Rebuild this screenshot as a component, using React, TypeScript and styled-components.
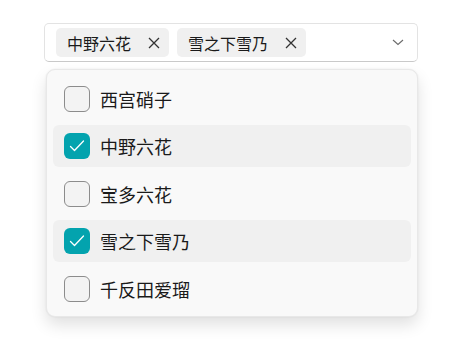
import React, { useState } from "react";
import styled, { createGlobalStyle } from "styled-components";

const GlobalStyle = createGlobalStyle`
  html, body {
    margin: 0;
    padding: 0;
    background: #ffffff;
  }
  body {
    font-family: "Noto Sans CJK SC", "Noto Sans", sans-serif;
    color: #1a1a1a;
  }
`

const Page = styled.div`
  width: 462px;
  height: 362px;
  padding: 23px 44px 0 44px;
  box-sizing: border-box;
  display: flex;
  flex-direction: column;
  gap: 7px;
`

const Field = styled.div`
  height: 39px;
  box-sizing: border-box;
  border: 1px solid #e3e3e3;
  border-bottom-color: #c9c9c9;
  border-radius: 5px;
  background: #ffffff;
  display: flex;
  align-items: center;
  padding: 0 13px 0 11px;
  gap: 8px;
`

const Tag = styled.div`
  height: 29px;
  box-sizing: border-box;
  background: #f0f0f0;
  border-radius: 5px;
  display: flex;
  align-items: center;
  padding: 0 9px 0 11px;
  gap: 17px;
  font-size: 16px;
  line-height: 1;
`

const Chevron = styled.div`
  margin-left: auto;
  display: flex;
  align-items: center;
`

const Panel = styled.div`
  margin: 0 0 0 2px;
  width: 372px;
  box-sizing: border-box;
  background: #f9f9f9;
  border: 1px solid #e8e8e8;
  border-radius: 9px;
  box-shadow: 0 8px 16px rgba(0, 0, 0, 0.12), 0 0 2px rgba(0, 0, 0, 0.08);
  padding: 7.5px 6px 6.5px 6px;
  display: flex;
  flex-direction: column;
  gap: 5.5px;
`

const Row = styled.div<{ $selected: boolean }>`
  height: 42px;
  border-radius: 6px;
  background: ${({ $selected }) => $selected ? "#f0f0f0" : "transparent"};
  display: flex;
  align-items: center;
  padding-left: 11px;
  gap: 10px;
  font-size: 18px;
  cursor: default;
`

const Box = styled.div<{ $checked: boolean }>`
  width: 26px;
  height: 26px;
  box-sizing: border-box;
  border-radius: 6px;
  border: ${({ $checked }) => $checked ? "none" : "1.5px solid #8c8c8c"};
  background: ${({ $checked }) => $checked ? "#03a3ae" : "#f3f3f3"};
  display: flex;
  align-items: center;
  justify-content: center;
`

const Close = () => (
  <svg width="12" height="12" viewBox="0 0 12 12">
    <path d="M1 1 L11 11 M11 1 L1 11" stroke="#333" strokeWidth="1.3" fill="none" />
  </svg>
)

const names = ["西宫硝子", "中野六花", "宝多六花", "雪之下雪乃", "千反田爱瑠"]

export default function App() {
  const [selected, setSelected] = useState<string[]>(["中野六花", "雪之下雪乃"])
  const toggle = (n: string) =>
    setSelected(s => s.includes(n) ? s.filter(x => x != n) : names.filter(x => x == n || s.includes(x)))

  return (<>
    <GlobalStyle />
    <Page>
      <Field>
        {selected.map(n => (
          <Tag key={n}>
            <span>{n}</span>
            <span onClick={() => toggle(n)} style={{ display: "flex" }}><Close /></span>
          </Tag>
        ))}
        <Chevron>
          <svg width="12" height="7" viewBox="0 0 12 7">
            <path d="M1 1 L6 5.5 L11 1" stroke="#6b6b6b" strokeWidth="1.1" fill="none" />
          </svg>
        </Chevron>
      </Field>
      <Panel>
        {names.map(n => {
          const checked = selected.includes(n)
          return (
            <Row key={n} $selected={checked} onClick={() => toggle(n)}>
              <Box $checked={checked}>
                {checked && (
                  <svg width="26" height="26" viewBox="0 0 26 26">
                    <path d="M6.5 13.5 L10.5 17.5 L19.5 8" stroke="#fff" strokeWidth="1.3" fill="none" strokeLinecap="round" strokeLinejoin="round" />
                  </svg>
                )}
              </Box>
              <span>{n}</span>
            </Row>
          )
        })}
      </Panel>
    </Page>
  </>)
}
